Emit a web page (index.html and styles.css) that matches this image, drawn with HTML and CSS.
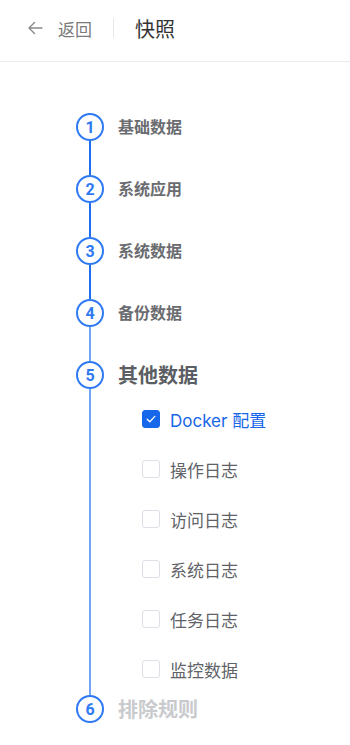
FILE: index.html
```html
<!DOCTYPE html>
<html lang="zh">
<head>
<meta charset="utf-8">
<link rel="stylesheet" href="styles.css">
</head>
<body>
<header class="header">
  <a class="back">
    <svg class="back-icon" width="16" height="16" viewBox="0 0 16 16"><path d="M15 8H2M7.5 2.5L2 8l5.5 5.5" fill="none" stroke="#8a8a8a" stroke-width="1.4" stroke-linecap="round" stroke-linejoin="round"/></svg>
    <span>返回</span>
  </a>
  <span class="divider"></span>
  <h1 class="title">快照</h1>
</header>
<main class="steps">
  <div class="step">
    <div class="rail"><span class="dot">1</span><span class="line dark"></span></div>
    <div class="content"><div class="step-title">基础数据</div></div>
  </div>
  <div class="step">
    <div class="rail"><span class="dot">2</span><span class="line dark"></span></div>
    <div class="content"><div class="step-title">系统应用</div></div>
  </div>
  <div class="step">
    <div class="rail"><span class="dot">3</span><span class="line dark"></span></div>
    <div class="content"><div class="step-title">系统数据</div></div>
  </div>
  <div class="step">
    <div class="rail"><span class="dot">4</span><span class="line light"></span></div>
    <div class="content"><div class="step-title">备份数据</div></div>
  </div>
  <div class="step active">
    <div class="rail"><span class="dot">5</span><span class="line light"></span></div>
    <div class="content">
      <div class="step-title big">其他数据</div>
      <ul class="checks">
        <li class="check checked"><span class="box"><svg width="12" height="12" viewBox="0 0 12 12"><path d="M2.2 6.2l2.6 2.6 5-5.4" fill="none" stroke="#fff" stroke-width="1.3" stroke-linecap="round" stroke-linejoin="round"/></svg></span><span class="label">Docker 配置</span></li>
        <li class="check"><span class="box"></span><span class="label">操作日志</span></li>
        <li class="check"><span class="box"></span><span class="label">访问日志</span></li>
        <li class="check"><span class="box"></span><span class="label">系统日志</span></li>
        <li class="check"><span class="box"></span><span class="label">任务日志</span></li>
        <li class="check"><span class="box"></span><span class="label">监控数据</span></li>
      </ul>
    </div>
  </div>
  <div class="step last">
    <div class="rail"><span class="dot">6</span></div>
    <div class="content"><div class="step-title big muted">排除规则</div></div>
  </div>
</main>
</body>
</html>
```
FILE: styles.css
```css
* { box-sizing: border-box; }
html, body { margin: 0; padding: 0; background: #fff; }
body {
  font-family: Inter, Roboto, "Noto Sans CJK SC", "Noto Sans", sans-serif;
  color: #606266;
  width: 350px;
  overflow: hidden;
}
.header {
  height: 62px;
  display: flex;
  align-items: center;
  padding: 0 0 5px 27px;
  border-bottom: 1px solid #ececec;
}
.back {
  display: flex;
  align-items: center;
  gap: 15px;
  color: #7a7a7a;
  font-size: 17px;
}
.back-icon { display: block; }
.divider {
  width: 1px;
  height: 20px;
  background: #e6e6e6;
  margin: 0 21px 0 21px;
}
.title {
  margin: 0;
  font-size: 20px;
  font-weight: 400;
  color: #333;
}
.steps {
  padding: 51px 0 0 76px;
}
.step {
  display: flex;
  height: 62px;
}
.step.active { height: 334px; }
.step.last { height: 28px; }
.rail {
  width: 28px;
  display: flex;
  flex-direction: column;
  align-items: center;
}
.dot {
  width: 28px;
  height: 28px;
  flex: none;
  border: 2px solid #2f7af3;
  border-radius: 50%;
  display: flex;
  align-items: center;
  justify-content: center;
  color: #2f7af3;
  font-family: Roboto, Inter, sans-serif;
  font-weight: 700;
  font-size: 16px;
}
.line {
  width: 2px;
  flex: 1;
}
.line.dark { background: #1d6ef0; }
.line.light { background: #70a6f6; }
.content {
  margin-left: 14px;
}
.step-title {
  height: 28px;
  line-height: 28px;
  font-size: 16px;
  font-weight: 700;
  color: #6a6c70;
}
.step-title.big {
  font-size: 20px;
  line-height: 30px;
  height: 30px;
  color: #5b5e63;
}
.step-title.muted { color: #c9cacd; }
.checks {
  list-style: none;
  margin: 3px 0 0 0;
  padding: 0 0 0 24px;
}
.check {
  height: 50px;
  display: flex;
  align-items: center;
  gap: 10px;
  font-size: 17px;
  color: #5f6368;
}
.box {
  width: 18px;
  height: 18px;
  border: 1px solid #dcdfe6;
  border-radius: 3px;
  display: flex;
  align-items: center;
  justify-content: center;
}
.check.checked .box {
  background: #1767ea;
  border-color: #1767ea;
}
.check.checked .label { color: #1767ea; }
```
